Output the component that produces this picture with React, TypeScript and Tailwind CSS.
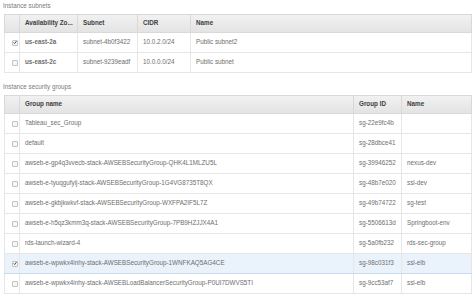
import React from "react";

const font = { fontFamily: '"Liberation Sans", Arial, sans-serif' };

function Box({ checked }: { checked?: boolean }) {
  return (
    <div className="flex justify-center">
      <div className="w-[6px] h-[6px] border border-[#c2c2c2] rounded-[1px] bg-[#f7f7f7] flex items-center justify-center">
        {checked && (
          <svg width="5" height="5" viewBox="0 0 5 5">
            <path d="M0.8 2.5 L2 3.8 L4.3 0.8" stroke="#333" strokeWidth="1.1" fill="none" />
          </svg>
        )}
      </div>
    </div>
  );
}

const th = "h-[18px] border border-[#d9d9d9] text-left font-bold text-[#3d3d3d] pl-[5px] whitespace-nowrap overflow-hidden";
const td = "h-[20px] border border-[#e6e6e6] pl-[5px] text-[#6e6e6e] whitespace-nowrap overflow-hidden";

const subnets = [
  { az: "us-east-2a", subnet: "subnet-4b0f3422", cidr: "10.0.2.0/24", name: "Public subnet2", checked: true },
  { az: "us-east-2c", subnet: "subnet-9239eadf", cidr: "10.0.0.0/24", name: "Public subnet", checked: false },
];

const groups = [
  { g: "Tableau_sec_Group", id: "sg-22e9fc4b", n: "" },
  { g: "default", id: "sg-28dbce41", n: "" },
  { g: "awseb-e-gp4q3vvecb-stack-AWSEBSecurityGroup-QHK4L1MLZU5L", id: "sg-39946252", n: "nexus-dev" },
  { g: "awseb-e-tyuqgufyij-stack-AWSEBSecurityGroup-1G4VG8735T8QX", id: "sg-48b7e020", n: "ssl-dev" },
  { g: "awseb-e-gkbjkwkvf-stack-AWSEBSecurityGroup-WXFPA2IF5L7Z", id: "sg-49b74722", n: "sg-test" },
  { g: "awseb-e-h5qz3kmm3q-stack-AWSEBSecurityGroup-7PB9HZJJX4A1", id: "sg-5506613d", n: "Springboot-env" },
  { g: "rds-launch-wizard-4", id: "sg-5a0fb232", n: "rds-sec-group" },
  { g: "awseb-e-wpwkx4inhy-stack-AWSEBSecurityGroup-1WNFKAQ5AG4CE", id: "sg-98c031f3", n: "ssl-elb", sel: true },
  { g: "awseb-e-wpwkx4inhy-stack-AWSEBLoadBalancerSecurityGroup-P0UI7DWVS5TI", id: "sg-9cc53af7", n: "ssl-elb" },
];

export default function App() {
  return (
    <div className="w-[474px] h-[298px] bg-white overflow-hidden text-[6.3px] leading-none" style={font}>
      <div className="h-[12px] pl-[3px] pt-[3px] text-[#7a7a7a]">Instance subnets</div>
      <div className="pl-[4px] mt-[2px]">
        <table className="table-fixed border-collapse w-[468px]">
          <colgroup>
            <col className="w-[15px]" />
            <col className="w-[58px]" />
            <col className="w-[60px]" />
            <col className="w-[53px]" />
            <col />
          </colgroup>
          <thead>
            <tr className="bg-gradient-to-b from-[#f1f1f1] to-[#e3e3e3]">
              <th className={th}></th>
              <th className={th}>Availability Zo...</th>
              <th className={th + " pl-[4px]"}>Subnet</th>
              <th className={th + " pl-[4px]"}>CIDR</th>
              <th className={th + " pl-[4px]"}>Name</th>
            </tr>
          </thead>
          <tbody>
            {subnets.map((s) => (
              <tr key={s.az}>
                <td className={td + " pl-0"}>
                  <Box checked={s.checked} />
                </td>
                <td className={td + " font-bold text-[#3a3a3a]"}>{s.az}</td>
                <td className={td + " pl-[4px]"}>{s.subnet}</td>
                <td className={td + " pl-[4px]"}>{s.cidr}</td>
                <td className={td + " pl-[4px]"}>{s.name}</td>
              </tr>
            ))}
          </tbody>
        </table>
      </div>
      <div className="h-[12px] pl-[3px] pt-[3px] mt-[8px] text-[#7a7a7a]">Instance security groups</div>
      <div className="pl-[4px] mt-[2px]">
        <table className="table-fixed border-collapse w-[468px]">
          <colgroup>
            <col className="w-[15px]" />
            <col className="w-[334px]" />
            <col className="w-[48px]" />
            <col />
          </colgroup>
          <thead>
            <tr className="bg-gradient-to-b from-[#f1f1f1] to-[#e3e3e3]">
              <th className={th}></th>
              <th className={th}>Group name</th>
              <th className={th + " pl-[4px]"}>Group ID</th>
              <th className={th}>Name</th>
            </tr>
          </thead>
          <tbody>
            {groups.map((g) => (
              <tr key={g.id} className={g.sel ? "bg-[#eaf3fc]" : ""}>
                <td className={td + " pl-0" + (g.sel ? " border-y-[#c9dcef]" : "")}>
                  <Box checked={g.sel} />
                </td>
                <td className={td + (g.sel ? " border-y-[#c9dcef]" : "")}>{g.g}</td>
                <td className={td + " pl-[4px]" + (g.sel ? " border-y-[#c9dcef]" : "")}>{g.id}</td>
                <td className={td + (g.sel ? " border-y-[#c9dcef]" : "")}>{g.n}</td>
              </tr>
            ))}
          </tbody>
        </table>
      </div>
    </div>
  );
}
